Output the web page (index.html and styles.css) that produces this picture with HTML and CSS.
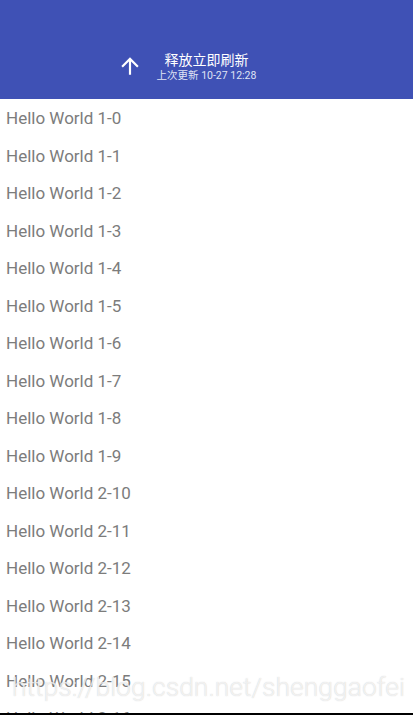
FILE: index.html
```html
<!DOCTYPE html>
<html>
<head>
<meta charset="utf-8">
<link rel="stylesheet" href="styles.css">
</head>
<body>
<div class="header">
  <div class="refresh">
    <svg class="arrow" width="26" height="26" viewBox="0 0 24 24"><path d="M4 12l1.41 1.41L11 7.83V20h2V7.83l5.58 5.59L20 12l-8-8-8 8z" fill="#fff"/></svg>
    <div class="texts">
      <div class="title">释放立即刷新</div>
      <div class="sub">上次更新 10-27 12:28</div>
    </div>
  </div>
</div>
<div class="list">
  <div class="item">Hello World 1-0</div>
  <div class="item">Hello World 1-1</div>
  <div class="item">Hello World 1-2</div>
  <div class="item">Hello World 1-3</div>
  <div class="item">Hello World 1-4</div>
  <div class="item">Hello World 1-5</div>
  <div class="item">Hello World 1-6</div>
  <div class="item">Hello World 1-7</div>
  <div class="item">Hello World 1-8</div>
  <div class="item">Hello World 1-9</div>
  <div class="item">Hello World 2-10</div>
  <div class="item">Hello World 2-11</div>
  <div class="item">Hello World 2-12</div>
  <div class="item">Hello World 2-13</div>
  <div class="item">Hello World 2-14</div>
  <div class="item">Hello World 2-15</div>
  <div class="item">Hello World 2-16</div>
</div>
<div class="watermark">https://blog.csdn.net/shenggaofei</div>
<div class="bottom-line"></div>
</body>
</html>
```
FILE: styles.css
```css
html, body {
  margin: 0;
  padding: 0;
  width: 413px;
  height: 715px;
  overflow: hidden;
  background: #fff;
  font-family: Roboto, "Noto Sans CJK SC", sans-serif;
}
body {
  position: relative;
}
.header {
  height: 99px;
  background: #3f51b5;
  display: flex;
  align-items: center;
  justify-content: center;
}
.refresh {
  display: flex;
  align-items: center;
  margin-top: 33px;
}
.arrow {
  margin-right: 14px;
}
.texts {
  display: flex;
  flex-direction: column;
  align-items: center;
  margin-right: 40px;
}
.title {
  color: #fff;
  font-size: 14px;
  line-height: 18px;
}
.sub {
  color: #dfe3f4;
  font-size: 10.5px;
  line-height: 13px;
}
.list {
  padding-top: 1px;
}
.item {
  height: 37.5px;
  line-height: 37.5px;
  padding-left: 6px;
  font-size: 17px;
  color: #7c7c7c;
}
.watermark {
  position: absolute;
  left: 12px;
  top: 671px;
  font-family: Roboto, sans-serif;
  font-weight: 300;
  font-size: 26.5px;
  line-height: 32px;
  color: rgba(255,255,255,0.7);
  text-shadow: 0 0 1px rgba(170,170,170,0.6);
  white-space: nowrap;
}
.bottom-line {
  position: absolute;
  left: 0;
  top: 713px;
  width: 413px;
  height: 2px;
  background: #000;
}
```
